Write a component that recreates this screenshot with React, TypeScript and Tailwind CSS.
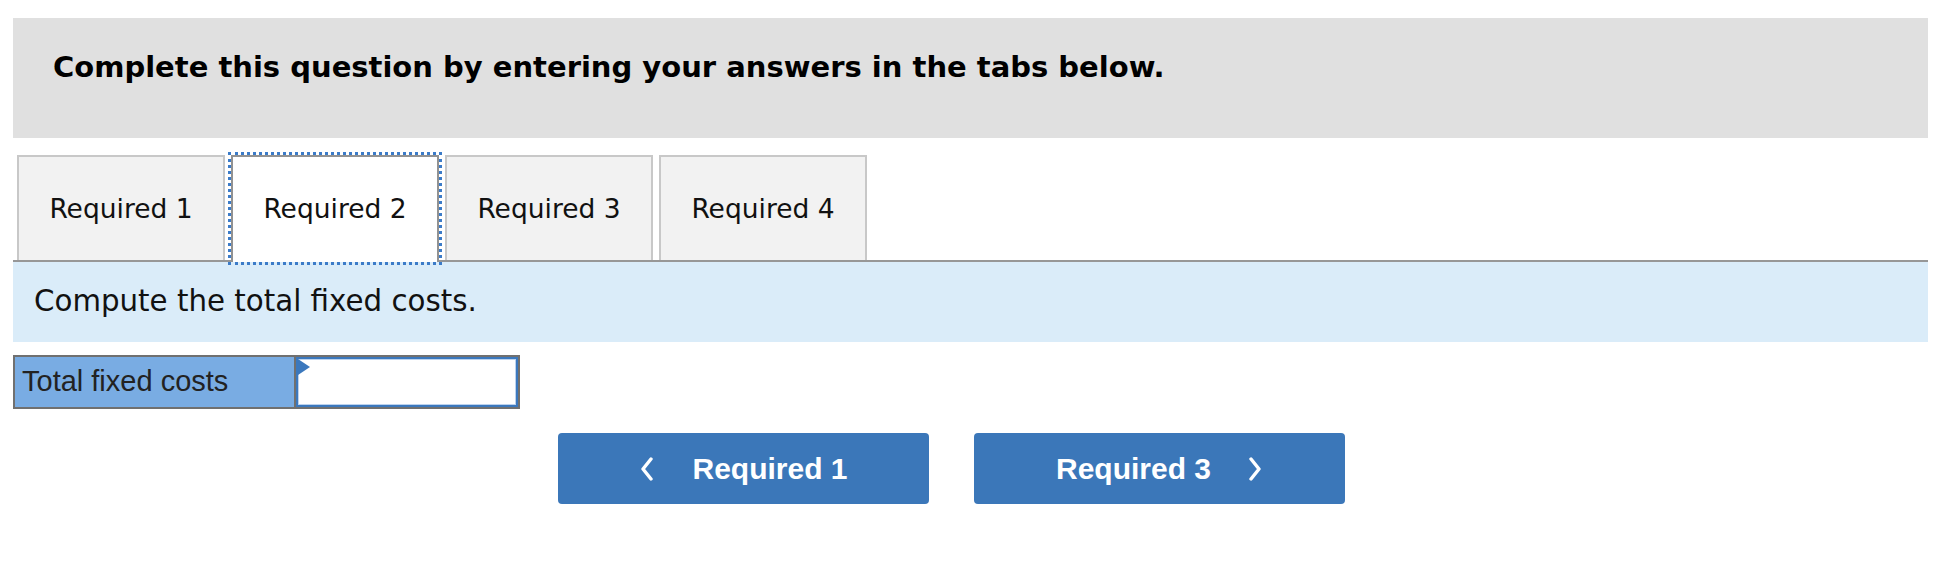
import React from "react";

const tabs = ["Required 1", "Required 2", "Required 3", "Required 4"];

function Chevron({ dir }: { dir: "left" | "right" }) {
  return (
    <svg width="16" height="24" viewBox="0 0 16 24" className="shrink-0">
      <polyline
        points={dir === "left" ? "12,2 4,12 12,22" : "4,2 12,12 4,22"}
        fill="none"
        stroke="white"
        strokeWidth="3.4"
        strokeLinecap="round"
        strokeLinejoin="round"
      />
    </svg>
  );
}

export default function App() {
  return (
    <div className="w-[1948px] h-[564px] bg-white pt-[18px]">
      <div className="ml-[13px] w-[1915px]">
        {/* header */}
        <div className="h-[120px] bg-[#e0e0e0] pt-[32px] pl-[40px]">
          <div
            className="text-[29px] leading-[34px] font-bold text-black"
            style={{ fontFamily: '"DejaVu Sans", Verdana, sans-serif' }}
          >
            Complete this question by entering your answers in the tabs below.
          </div>
        </div>

        {/* tabs */}
        <div className="mt-[17px] flex gap-[6px] pl-[4px] border-b-2 border-[#979797] h-[107px]">
          {tabs.map((t, i) =>
            i === 1 ? (
              <div
                key={t}
                className="relative z-10 w-[208px] h-[107px] pb-[2px] bg-white border-2 border-b-0 border-[#929292] outline-[3px] outline-dotted outline-[#3b7bc8] outline-offset-0 flex items-center justify-center text-[26.5px] text-[#111]"
                style={{ fontFamily: '"DejaVu Sans", Verdana, sans-serif' }}
              >
                {t}
              </div>
            ) : (
              <div
                key={t}
                className="w-[208px] h-[105px] bg-[#f2f2f2] border-2 border-b-0 border-[#c8c8c8] flex items-center justify-center text-[26.5px] text-[#111]"
                style={{ fontFamily: '"DejaVu Sans", Verdana, sans-serif' }}
              >
                {t}
              </div>
            )
          )}
        </div>

        {/* instruction band */}
        <div
          className="h-[80px] bg-[#daecf9] flex items-center pl-[21px] text-[29.3px] text-[#111]"
          style={{ fontFamily: '"DejaVu Sans", Verdana, sans-serif' }}
        >
          Compute the total fixed costs.
        </div>

        {/* input row */}
        <div className="mt-[13px] flex w-[507px] h-[54px] border-2 border-[#707070]">
          <div
            className="w-[279px] h-full bg-[#79ace3] flex items-center pl-[7px] text-[29px] text-[#222]"
            style={{ fontFamily: '"Liberation Sans", Arial, sans-serif' }}
          >
            Total fixed costs
          </div>
          <div className="w-[2px] h-full bg-[#707070]" />
          <div className="relative flex-1 h-full border-2 border-[#3b78bd] bg-white">
            <div className="h-full w-full border border-[#bcd2ee]" />
            <svg
              width="12"
              height="16"
              viewBox="0 0 12 16"
              className="absolute left-0 top-0"
            >
              <polygon points="0,0 12,8 0,16" fill="#3b78bd" />
            </svg>
          </div>
        </div>

        {/* nav buttons */}
        <div className="mt-[24px] flex gap-[45px] pl-[545px]">
          <button
            className="w-[371px] h-[71px] rounded-[4px] bg-[#3b77b9] flex items-center justify-center gap-[37px] text-white text-[30px] font-bold"
            style={{ fontFamily: '"Liberation Sans", Arial, sans-serif' }}
          >
            <Chevron dir="left" />
            <span>Required 1</span>
          </button>
          <button
            className="w-[371px] h-[71px] rounded-[4px] bg-[#3b77b9] flex items-center justify-center gap-[36px] text-white text-[30px] font-bold"
            style={{ fontFamily: '"Liberation Sans", Arial, sans-serif' }}
          >
            <span>Required 3</span>
            <Chevron dir="right" />
          </button>
        </div>
      </div>
    </div>
  );
}
